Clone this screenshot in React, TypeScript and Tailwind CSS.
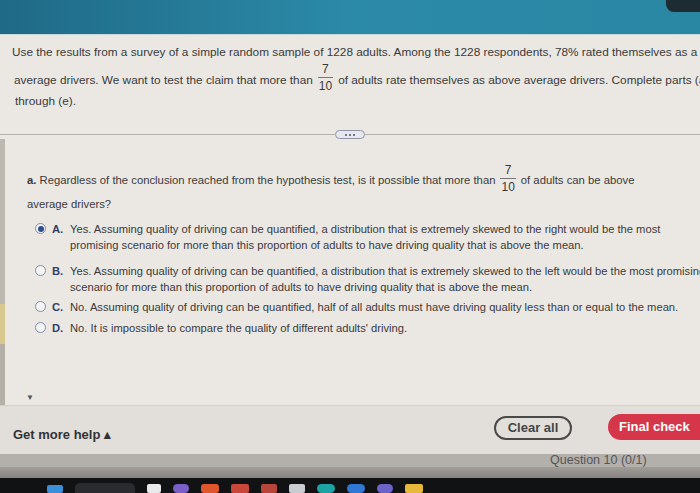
import React from 'react';

function Frac({ top, bottom }: { top: string; bottom: string }) {
  return (
    <span className="inline-flex flex-col items-center align-middle mx-[5px] -mt-[6px] leading-none text-[12px]">
      <span className="pb-[2px]">{top}</span>
      <span className="border-t border-[#777] px-[1px] pt-[2px]">{bottom}</span>
    </span>
  );
}

type Option = { key: string; lines: string[]; selected?: boolean; gap: string };

const options: Option[] = [
  {
    key: 'A.',
    selected: true,
    gap: 'mt-0',
    lines: [
      'Yes. Assuming quality of driving can be quantified, a distribution that is extremely skewed to the right would be the most',
      'promising scenario for more than this proportion of adults to have driving quality that is above the mean.',
    ],
  },
  {
    key: 'B.',
    gap: 'mt-[10px]',
    lines: [
      'Yes. Assuming quality of driving can be quantified, a distribution that is extremely skewed to the left would be the most promising',
      'scenario for more than this proportion of adults to have driving quality that is above the mean.',
    ],
  },
  {
    key: 'C.',
    gap: 'mt-[4px]',
    lines: ['No. Assuming quality of driving can be quantified, half of all adults must have driving quality less than or equal to the mean.'],
  },
  {
    key: 'D.',
    gap: 'mt-[5px]',
    lines: ["No. It is impossible to compare the quality of different adults' driving."],
  },
];

function Radio({ on }: { on?: boolean }) {
  return (
    <span className="flex h-[11px] w-[11px] shrink-0 items-center justify-center rounded-full border border-[#7d8fa8] bg-[#f4f4f4]">
      {on && <span className="h-[6px] w-[6px] rounded-full bg-[#2d4f8f]" />}
    </span>
  );
}

const taskIcons = [
  { x: 'bg-[#e9e9e9]', w: 'w-[14px]', r: 'rounded-[2px]' },
  { x: 'bg-[#7a5fc9]', w: 'w-[16px]', r: 'rounded-full' },
  { x: 'bg-[#e0562c]', w: 'w-[18px]', r: 'rounded-[3px]' },
  { x: 'bg-[#c8463a]', w: 'w-[18px]', r: 'rounded-[2px]' },
  { x: 'bg-[#b8453a]', w: 'w-[16px]', r: 'rounded-[2px]' },
  { x: 'bg-[#c9ccd0]', w: 'w-[16px]', r: 'rounded-[2px]' },
  { x: 'bg-[#1ea3a5]', w: 'w-[18px]', r: 'rounded-full' },
  { x: 'bg-[#2f78d6]', w: 'w-[18px]', r: 'rounded-full' },
  { x: 'bg-[#6b63c9]', w: 'w-[16px]', r: 'rounded-full' },
  { x: 'bg-[#e8b83a]', w: 'w-[18px]', r: 'rounded-[2px]' },
];

export default function App() {
  return (
    <div
      className="flex h-[493px] w-[700px] flex-col overflow-hidden bg-[#ebe8e4] text-[#3a3a3a]"
      style={{ fontFamily: '"Liberation Sans", Arial, sans-serif' }}
    >
      {/* browser / header band */}
      <div className="relative h-[35px] shrink-0 border-b border-[#c9d6da] bg-gradient-to-r from-[#1f6a86] via-[#2b8aa8] to-[#2a87a4]">
        <div className="absolute right-0 top-0 h-[12px] w-[34px] rounded-bl-[8px] bg-[#1d2b33]" />
      </div>

      {/* problem statement */}
      <div className="shrink-0 whitespace-nowrap px-[12px] pt-[6px] text-[11.8px] leading-[22px]">
        <div>
          Use the results from a survey of a simple random sample of 1228 adults. Among the 1228 respondents, 78% rated themselves as a
        </div>
        <div className="mt-[6px] pl-[2px]">
          average drivers. We want to test the claim that more than
          <Frac top="7" bottom="10" />
          of adults rate themselves as above average drivers. Complete parts (a
        </div>
        <div className="-mt-[2px] pl-[3px]">through (e).</div>
      </div>

      {/* divider */}
      <div className="mt-[18px] flex shrink-0 items-center">
        <div className="h-px flex-1 bg-[#b6b2ab]" />
        <div className="flex h-[9px] w-[30px] items-center justify-center gap-[2px] rounded-full border border-[#8e96a8] bg-[#e8e6ee]">
          <span className="h-[2px] w-[2px] rounded-full bg-[#555]" />
          <span className="h-[2px] w-[2px] rounded-full bg-[#555]" />
          <span className="h-[2px] w-[2px] rounded-full bg-[#555]" />
        </div>
        <div className="h-px flex-1 bg-[#b6b2ab]" />
      </div>

      {/* question area */}
      <div className="flex min-h-0 flex-1">
        <div className="flex w-[5px] shrink-0 flex-col">
          <div className="h-[165px] bg-[#bdb8b0]" />
          <div className="h-[40px] bg-[#d8c88e]" />
          <div className="flex-1 bg-[#b4afa7]" />
        </div>
        <div className="flex flex-1 flex-col">
          <div className="whitespace-nowrap pl-[22px] pt-[30px] text-[11.3px] leading-[22px]">
            <div>
              <span className="font-bold">a.</span> Regardless of the conclusion reached from the hypothesis test, is it possible that more than
              <Frac top="7" bottom="10" />
              of adults can be above
            </div>
            <div>average drivers?</div>
          </div>

          <div className="flex flex-col whitespace-nowrap pl-[30px] pt-[6px] text-[11.2px] leading-[16px]">
            {options.map((o) => (
              <div key={o.key} className={`flex items-start ${o.gap}`}>
                <div className="flex h-[16px] items-center">
                  <Radio on={o.selected} />
                </div>
                <span className="w-[18px] shrink-0 pl-[6px] font-bold text-[#2f3f6e]">{o.key}</span>
                <div className="pl-[6px]">
                  {o.lines.map((l, i) => (
                    <div key={i}>{l}</div>
                  ))}
                </div>
              </div>
            ))}
          </div>

          <div className="mt-auto pb-[3px] pl-[21px] text-[8px] leading-none text-[#555]">▼</div>
        </div>
      </div>

      {/* footer */}
      <div className="flex h-[49px] shrink-0 items-start border-t border-[#d3d0cb] bg-[#e2dfda] pl-[13px]">
        <span className="pt-[19px] text-[13px] font-bold text-[#333]">Get more help ▴</span>
        <button className="ml-auto mt-[10px] h-[24px] w-[78px] rounded-full border-2 border-[#4a4a4a] text-[13px] font-bold text-[#444]">
          Clear all
        </button>
        <button className="ml-[36px] mt-[8px] h-[26px] w-[92px] rounded-l-full rounded-r-[8px] bg-[#d6364a] text-left text-[13px] font-bold text-white">
          <span className="pl-[11px]">Final check</span>
        </button>
      </div>

      <div className="flex h-[13px] shrink-0 items-start overflow-hidden bg-[#b3b0ac] pl-[550px]">
        <span className="text-[12.5px] leading-[13px] text-[#555]">Question 10 (0/1)</span>
      </div>
      <div className="h-[11px] shrink-0 bg-gradient-to-b from-[#a19e9a] to-[#858280]" />

      {/* taskbar */}
      <div className="flex h-[15px] shrink-0 items-end gap-[12px] bg-[#111214] pl-[47px]">
        <div className="h-[8px] w-[16px] rounded-[2px] bg-[#3b8fd9]" />
        <div className="h-[10px] w-[60px] rounded-t-[5px] bg-[#2a2b2e]" />
        {taskIcons.map((t, i) => (
          <div key={i} className={`h-[9px] ${t.w} ${t.x} ${t.r}`} />
        ))}
      </div>
    </div>
  );
}
